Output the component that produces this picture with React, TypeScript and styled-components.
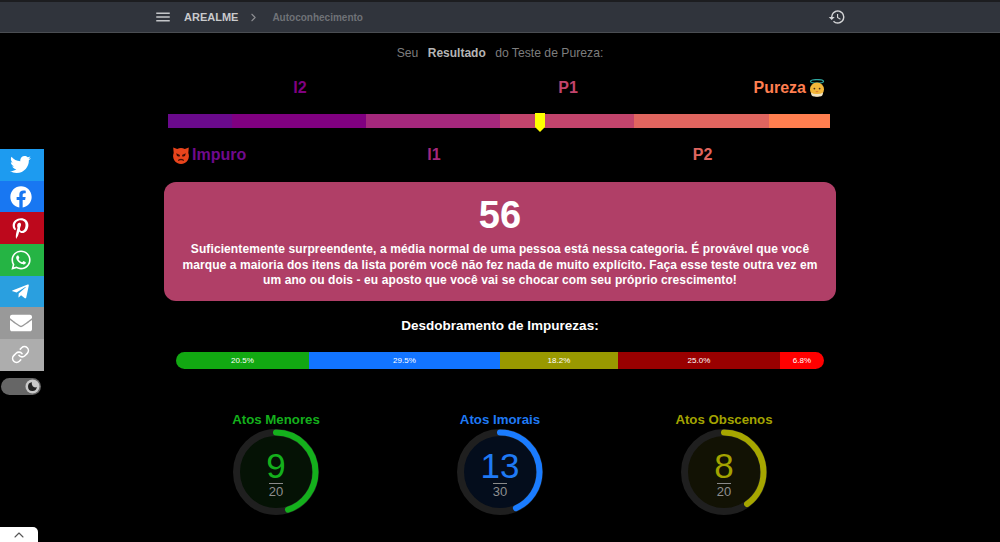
import React from "react";
import styled, { createGlobalStyle } from "styled-components";
import { FaEnvelope, FaFacebook, FaPinterestP, FaTelegramPlane, FaTwitter, FaWhatsapp } from "react-icons/fa";
import { MdHistory, MdMenu } from "react-icons/md";
import { ChevronRight, ChevronUp, Link as LinkIcon } from "lucide-react";

const GlobalStyle = createGlobalStyle`
	html, body {
		margin: 0;
		padding: 0;
		height: 100%;
		background: #000;
		overflow: hidden;
		font-family: "Liberation Sans", Arial, sans-serif;
	}
`;

const METER = [
	{ width: 64, color: "#6a0a8c" },
	{ width: 134, color: "#800080" },
	{ width: 134, color: "#a4287c" },
	{ width: 134, color: "#c2446c" },
	{ width: 135, color: "#e0655f" },
	{ width: 61, color: "#ff7f50" },
];

const BREAKDOWN = [
	{ value: 20.5, color: "#12a812" },
	{ value: 29.5, color: "#1274ff" },
	{ value: 18.2, color: "#999900" },
	{ value: 25.0, color: "#990000" },
	{ value: 6.8, color: "#ff0000" },
];

const GAUGES = [
	{ title: "Atos Menores", score: 9, total: 20, color: "#14b01c", label: "#14b01c", tint: "#051205" },
	{ title: "Atos Imorais", score: 13, total: 30, color: "#1a7cff", label: "#1f7af5", tint: "#040d1c" },
	{ title: "Atos Obscenos", score: 8, total: 20, color: "#a6a600", label: "#a3a300", tint: "#121204" },
];

const SHARES = [
	{ color: "#1d9bf0", icon: <FaTwitter size={21} /> },
	{ color: "#1877f2", icon: <FaFacebook size={22} /> },
	{ color: "#bd081c", icon: <FaPinterestP size={21} /> },
	{ color: "#25b444", icon: <FaWhatsapp size={22} /> },
	{ color: "#2a9fdf", icon: <FaTelegramPlane size={19} /> },
	{ color: "#999999", icon: <FaEnvelope size={22} /> },
	{ color: "#adadad", icon: <LinkIcon size={19} strokeWidth={2} /> },
];

const TopBar = styled.header`
	height: 30px;
	margin-top: 2px;
	border-bottom: 1px solid #4a4d52;
	background: #30343c;
	box-shadow: 0 -2px 0 #1c1d20;
	display: flex;
	justify-content: center;
`;

const TopBarInner = styled.div`
	width: 692px;
	display: flex;
	align-items: center;
	color: #c4c6c9;
`;

const Brand = styled.span`
	margin-left: 12px;
	font-size: 11px;
	font-weight: 700;
	color: #c9cacc;
`;

const Crumb = styled.span`
	margin-left: 12px;
	font-size: 10px;
	font-weight: 700;
	color: #6f7277;
`;

const HistoryButton = styled.span`
	margin-left: auto;
	display: flex;
	color: #d4d5d7;
`;

const Main = styled.main`
	width: 672px;
	margin: 0 auto;
	display: flex;
	flex-direction: column;
	align-items: center;
`;

const Intro = styled.p`
	margin: 13px 0 0;
	font-size: 12.2px;
	line-height: 15px;
	color: #7d7d7d;
`;

const IntroStrong = styled.strong`
	margin: 0 6px;
	font-size: 12px;
	color: #b5b5b5;
`;

const MeterBlock = styled.div`
	width: 662px;
	margin-top: 17px;
	align-self: flex-start;
	margin-left: 4px;
	display: flex;
	flex-direction: column;
`;

const LabelRow = styled.div`
	display: grid;
	grid-template-columns: ${METER.map((s) => `${s.width}px`).join(" ")};
	height: 20px;
`;

const MeterLabel = styled.span<{ $color: string; $col: number; $span?: number; $align?: string; $inset?: string }>`
	grid-column: ${(p) => p.$col} / span ${(p) => p.$span ?? 1};
	justify-self: ${(p) => p.$align ?? "center"};
	margin: ${(p) => p.$inset ?? "0 0 0 2px"};
	display: flex;
	align-items: center;
	gap: 2px;
	font-size: 16px;
	font-weight: 700;
	line-height: 20px;
	white-space: nowrap;
	color: ${(p) => p.$color};
`;

const Track = styled.div`
	position: relative;
	height: 14px;
	margin: 16px 0 17px;
	display: flex;
`;

const TrackSegment = styled.div<{ $width: number; $color: string }>`
	width: ${(p) => p.$width}px;
	background: ${(p) => p.$color};
`;

const Marker = styled.svg`
	position: absolute;
	left: 367px;
	top: -1px;
`;

const ResultCard = styled.section`
	box-sizing: border-box;
	width: 672px;
	height: 119px;
	margin-top: 17px;
	padding: 10px 12px 0;
	border-radius: 12px;
	background: #b03f67;
	color: #fff;
	text-align: center;
`;

const Score = styled.div`
	font-size: 38px;
	font-weight: 700;
	line-height: 46px;
`;

const ResultText = styled.p`
	margin: 4px 0 0;
	font-size: 12px;
	font-weight: 700;
	letter-spacing: 0.1px;
	line-height: 15.5px;
`;

const BreakdownTitle = styled.h2`
	margin: 17px 0 0;
	font-size: 13.5px;
	font-weight: 700;
	line-height: 16px;
	color: #fff;
`;

const BreakdownBar = styled.div`
	width: 648px;
	height: 17px;
	margin-top: 18px;
	display: flex;
	border-radius: 9px;
	overflow: hidden;
`;

const BreakdownPart = styled.div<{ $color: string }>`
	display: flex;
	align-items: center;
	justify-content: center;
	font-size: 8px;
	color: #fff;
	background: ${(p) => p.$color};
`;

const GaugeRow = styled.div`
	width: 100%;
	margin-top: 43px;
	display: grid;
	grid-template-columns: repeat(3, 1fr);
`;

const GaugeColumn = styled.div`
	display: flex;
	flex-direction: column;
	align-items: center;
`;

const GaugeTitle = styled.div<{ $color: string }>`
	font-size: 13.25px;
	font-weight: 700;
	line-height: 16px;
	color: ${(p) => p.$color};
`;

const Dial = styled.div`
	position: relative;
	width: 86px;
	height: 86px;
	margin-top: 1px;
`;

const DialFace = styled.div<{ $color: string }>`
	position: absolute;
	inset: 0;
	display: flex;
	flex-direction: column;
	align-items: center;
	padding-top: 19px;
	box-sizing: border-box;
	color: ${(p) => p.$color};
`;

const DialScore = styled.span`
	font-size: 35px;
	line-height: 35px;
`;

const DialTotal = styled.span`
	padding-top: 1px;
	border-top: 1px solid #8a8a8a;
	font-size: 13px;
	line-height: 13px;
	color: #8f8f8f;
`;

const ShareBar = styled.aside`
	position: fixed;
	left: 0;
	top: 149px;
	width: 44px;
	display: flex;
	flex-direction: column;
`;

const ShareButton = styled.a<{ $color: string }>`
	box-sizing: border-box;
	height: 31.7px;
	padding-right: 3px;
	display: flex;
	align-items: center;
	justify-content: center;
	color: #fff;
	background: ${(p) => p.$color};
`;

const ThemeToggle = styled.div`
	position: fixed;
	left: 1px;
	top: 378px;
	width: 40px;
	height: 17px;
	display: flex;
	align-items: center;
	justify-content: flex-end;
	padding-right: 1px;
	box-sizing: border-box;
	border-radius: 9px;
	background: #666;
`;

const ScrollTop = styled.button`
	position: fixed;
	left: 0;
	bottom: 0;
	width: 38px;
	height: 15px;
	padding: 0;
	display: flex;
	justify-content: center;
	border: 0;
	border-radius: 0 5px 0 0;
	background: #fff;
	color: #555;
`;

// no colour emoji font in the sandbox, so both faces are drawn
const DevilFace = () => (
	<svg width="18" height="18" viewBox="0 0 18 18">
		<path d="M1.2 1.5 L5.2 3 A8 8 0 0 1 12.8 3 L16.8 1.5 L16.3 7 A7.9 7.9 0 1 1 1.7 7 Z" fill="#e8441c" />
		<path d="M4.2 7.2 L8 9 L7.4 10.8 L5 10 Z M13.8 7.2 L10 9 L10.6 10.8 L13 10 Z" fill="#3a0d05" />
		<path d="M6 14.4 Q9 11.8 12 14.4 Q9 13.2 6 14.4 Z" fill="#3a0d05" stroke="#3a0d05" strokeWidth="0.6" />
	</svg>
);

const AngelFace = () => (
	<svg width="18" height="18" viewBox="0 0 18 18">
		<ellipse cx="9" cy="2.4" rx="6.5" ry="1.8" fill="none" stroke="#2fa8a0" strokeWidth="1.3" />
		<circle cx="9" cy="10.4" r="7" fill="#f2b63a" />
		<path d="M3 13.5 Q3 17.6 6.5 17.4 Q9 18.2 11.5 17.4 Q15 17.6 15 13.5 Q12.5 15.2 9 15 Q5.5 15.2 3 13.5 Z" fill="#efe3c4" />
		<circle cx="6.4" cy="9.6" r="0.9" fill="#4a2c10" />
		<circle cx="11.6" cy="9.6" r="0.9" fill="#4a2c10" />
		<path d="M7.4 12.6 Q9 14 10.6 12.6 Z" fill="#c9482c" />
	</svg>
);

const MoonKnob = () => (
	<svg width="15" height="15" viewBox="0 0 15 15">
		<circle cx="7.5" cy="7.5" r="7" fill="#c9c9c9" />
		<path d="M7 3.2 A4.4 4.4 0 1 0 11.8 8 A3.6 3.6 0 0 1 7 3.2 Z" fill="#222" />
	</svg>
);

const GaugeRing = ({ score, total, color, tint }: { score: number; total: number; color: string; tint: string }) => {
	const radius = 39.5;
	const length = 2 * Math.PI * radius;
	return (
		<svg width="86" height="86" viewBox="0 0 86 86">
			<circle cx="43" cy="43" r={radius} fill={tint} stroke="#1f1f1f" strokeWidth="7" />
			<circle
				cx="43"
				cy="43"
				r={radius}
				fill="none"
				stroke={color}
				strokeWidth="6"
				strokeLinecap="round"
				strokeDasharray={`${(score / total) * length} ${length}`}
				transform="rotate(-90 43 43)"
			/>
		</svg>
	);
};

const App = () => {
	return (
		<>
			<GlobalStyle />

			<TopBar>
				<TopBarInner>
					<MdMenu size={18} />
					<Brand>AREALME</Brand>
					<ChevronRight size={13} strokeWidth={2} color="#8b8d91" style={{ marginLeft: 9 }} />
					<Crumb>Autoconhecimento</Crumb>
					<HistoryButton>
						<MdHistory size={18} />
					</HistoryButton>
				</TopBarInner>
			</TopBar>

			<Main>
				<Intro>
					Seu <IntroStrong>Resultado</IntroStrong> do Teste de Pureza:
				</Intro>

				<MeterBlock>
					<LabelRow>
						<MeterLabel $col={2} $color="#800080">I2</MeterLabel>
						<MeterLabel $col={4} $color="#c2446c">P1</MeterLabel>
						<MeterLabel $col={5} $span={2} $align="end" $inset="0 4px 0 0" $color="#ff7f50">
							Pureza <AngelFace />
						</MeterLabel>
					</LabelRow>
					<Track>
						{METER.map((segment) => (
							<TrackSegment key={segment.color} $width={segment.width} $color={segment.color} />
						))}
						<Marker width="10" height="19" viewBox="0 0 10 19">
							<path d="M0 0 H10 V14 L5 19 L0 14 Z" fill="#ffff00" />
						</Marker>
					</Track>
					<LabelRow>
						<MeterLabel $col={1} $span={2} $align="start" $inset="0 0 0 4px" $color="#6f0a8c">
							<DevilFace /> Impuro
						</MeterLabel>
						<MeterLabel $col={3} $color="#a4287c">I1</MeterLabel>
						<MeterLabel $col={5} $color="#e0655f">P2</MeterLabel>
					</LabelRow>
				</MeterBlock>

				<ResultCard>
					<Score>56</Score>
					<ResultText>
						Suficientemente surpreendente, a média normal de uma pessoa está nessa categoria. É provável que você
						marque a maioria dos itens da lista porém você não fez nada de muito explícito. Faça esse teste outra
						vez em um ano ou dois - eu aposto que você vai se chocar com seu próprio crescimento!
					</ResultText>
				</ResultCard>

				<BreakdownTitle>Desdobramento de Impurezas:</BreakdownTitle>
				<BreakdownBar>
					{BREAKDOWN.map((part) => (
						<BreakdownPart key={part.color} $color={part.color} style={{ width: `${part.value}%` }}>
							{part.value.toFixed(1)}%
						</BreakdownPart>
					))}
				</BreakdownBar>

				<GaugeRow>
					{GAUGES.map((gauge) => (
						<GaugeColumn key={gauge.title}>
							<GaugeTitle $color={gauge.label}>{gauge.title}</GaugeTitle>
							<Dial>
								<GaugeRing score={gauge.score} total={gauge.total} color={gauge.color} tint={gauge.tint} />
								<DialFace $color={gauge.label}>
									<DialScore>{gauge.score}</DialScore>
									<DialTotal>{gauge.total}</DialTotal>
								</DialFace>
							</Dial>
						</GaugeColumn>
					))}
				</GaugeRow>
			</Main>

			<ShareBar>
				{SHARES.map((share) => (
					<ShareButton key={share.color} $color={share.color}>
						{share.icon}
					</ShareButton>
				))}
			</ShareBar>
			<ThemeToggle>
				<MoonKnob />
			</ThemeToggle>
			<ScrollTop>
				<ChevronUp size={16} strokeWidth={1.6} />
			</ScrollTop>
		</>
	);
};

export default App;
